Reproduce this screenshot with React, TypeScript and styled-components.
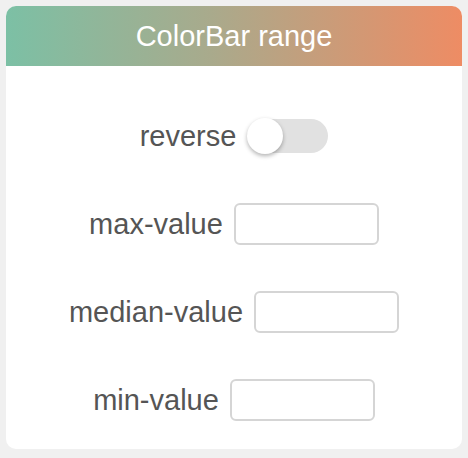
import React from "react";
import styled, { createGlobalStyle } from "styled-components";

const Global = createGlobalStyle`
  html, body { margin: 0; padding: 0; background: #f0f0f0; }
  body { font-family: "Liberation Sans", Arial, sans-serif; }
  * { box-sizing: border-box; }
`;

const Page = styled.div`
  padding: 6px;
  width: 468px;
`;

const Card = styled.div`
  background: #ffffff;
  border-radius: 10px;
  overflow: hidden;
  width: 456px;
`;

const Header = styled.div`
  height: 60px;
  background: linear-gradient(to right, #7cc0a5 0%, #a9aa8c 45%, #ee8c64 100%);
  color: #ffffff;
  font-size: 29px;
  display: flex;
  align-items: center;
  justify-content: center;
`;

const Body = styled.div`
  padding: 26px 0 5px;
  display: flex;
  flex-direction: column;
`;

const Row = styled.div`
  height: 88px;
  display: flex;
  align-items: center;
  justify-content: center;
  gap: 11px;
`;

const Label = styled.span`
  font-size: 29px;
  color: #555555;
`;

const Input = styled.input`
  width: 145px;
  height: 42px;
  border: 2px solid #d5d5d5;
  border-radius: 6px;
  background: #fff;
  outline: none;
  font-size: 18px;
  padding: 0 8px;
`;

const Toggle = styled.div`
  position: relative;
  width: 81px;
  height: 36px;
  display: flex;
  align-items: center;
`;

const Track = styled.div`
  width: 78px;
  height: 34px;
  margin-left: 3px;
  border-radius: 17px;
  background: #e1e1e1;
`;

const Knob = styled.div`
  position: absolute;
  left: 0;
  top: 0;
  width: 36px;
  height: 36px;
  border-radius: 50%;
  background: #ffffff;
  box-shadow: 0 2px 4px rgba(0, 0, 0, 0.3);
`;

export default function App() {
  return (
    <>
      <Global />
      <Page>
        <Card>
          <Header>ColorBar range</Header>
          <Body>
            <Row>
              <Label>reverse</Label>
              <Toggle>
                <Track />
                <Knob />
              </Toggle>
            </Row>
            <Row>
              <Label>max-value</Label>
              <Input />
            </Row>
            <Row>
              <Label>median-value</Label>
              <Input />
            </Row>
            <Row>
              <Label>min-value</Label>
              <Input />
            </Row>
          </Body>
        </Card>
      </Page>
    </>
  );
}
